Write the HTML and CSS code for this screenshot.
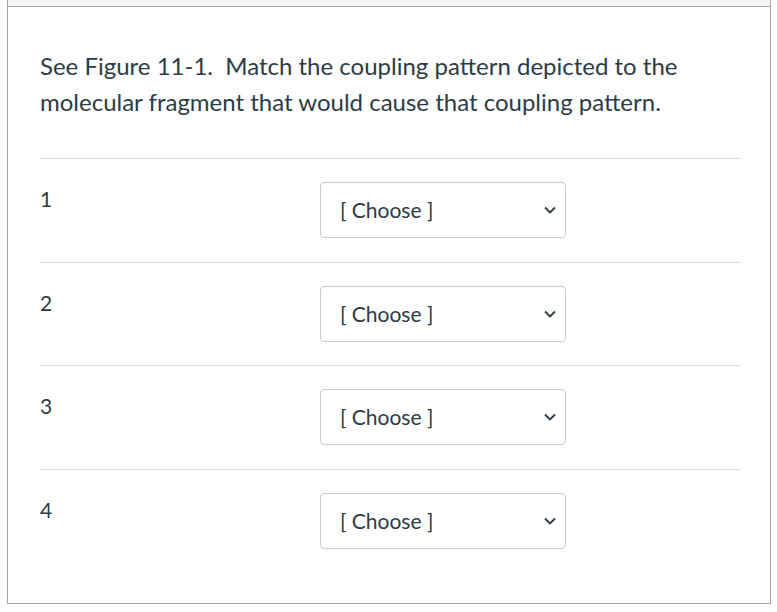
FILE: index.html
```html
<!DOCTYPE html>
<html lang="en">
<head>
<meta charset="utf-8">
<title>Question</title>
<link rel="stylesheet" href="styles.css">
</head>
<body>
<div class="card">
  <div class="card-header"></div>
  <div class="card-body">
    <p class="question">See Figure 11-1.&nbsp; Match the coupling pattern depicted to the molecular fragment that would cause that coupling pattern.</p>
    <div class="answers">
      <div class="row">
        <div class="num">1</div>
        <div class="select"><span class="sel-text">[ Choose ]</span><svg class="chev" width="12" height="8" viewBox="0 0 12 8"><path d="M1 1.5 L6 6.5 L11 1.5" fill="none" stroke="#2d3b45" stroke-width="1.9"/></svg></div>
      </div>
      <div class="row">
        <div class="num">2</div>
        <div class="select"><span class="sel-text">[ Choose ]</span><svg class="chev" width="12" height="8" viewBox="0 0 12 8"><path d="M1 1.5 L6 6.5 L11 1.5" fill="none" stroke="#2d3b45" stroke-width="1.9"/></svg></div>
      </div>
      <div class="row">
        <div class="num">3</div>
        <div class="select"><span class="sel-text">[ Choose ]</span><svg class="chev" width="12" height="8" viewBox="0 0 12 8"><path d="M1 1.5 L6 6.5 L11 1.5" fill="none" stroke="#2d3b45" stroke-width="1.9"/></svg></div>
      </div>
      <div class="row">
        <div class="num">4</div>
        <div class="select"><span class="sel-text">[ Choose ]</span><svg class="chev" width="12" height="8" viewBox="0 0 12 8"><path d="M1 1.5 L6 6.5 L11 1.5" fill="none" stroke="#2d3b45" stroke-width="1.9"/></svg></div>
      </div>
    </div>
  </div>
</div>
</body>
</html>
```
FILE: styles.css
```css
html, body {
  margin: 0;
  padding: 0;
  background: #ffffff;
}
body {
  font-family: Lato, "Open Sans", sans-serif;
  color: #2d3b45;
}
.card {
  box-sizing: border-box;
  margin-left: 7px;
  width: 764px;
  border-left: 1px solid #a6a6a6;
  border-right: 1px solid #a6a6a6;
  border-bottom: 1px solid #a6a6a6;
  height: 604px;
}
.card-header {
  height: 6px;
  background: #f5f5f5;
  border-bottom: 1px solid #a6a6a6;
}
.card-body {
  padding: 41px 29px 0 32px;
}
.question {
  margin: 0;
  font-size: 24px;
  line-height: 36px;
}
.answers {
  margin-top: 38px;
}
.row {
  border-top: 1px solid #dcdcdc;
  padding: 23px 0 23.67px;
  display: flex;
  align-items: flex-start;
}
.num {
  width: 280px;
  font-size: 21px;
  line-height: 28px;
  padding-top: 3px;
}
.select {
  box-sizing: border-box;
  width: 246px;
  height: 56px;
  border: 1px solid #c7cdd1;
  border-radius: 4px;
  display: flex;
  align-items: center;
  justify-content: space-between;
  padding: 0 9px 0 19px;
}
.sel-text {
  font-size: 21px;
  line-height: 28px;
  color: #2d3b45;
}
.chev {
  display: block;
}
```
